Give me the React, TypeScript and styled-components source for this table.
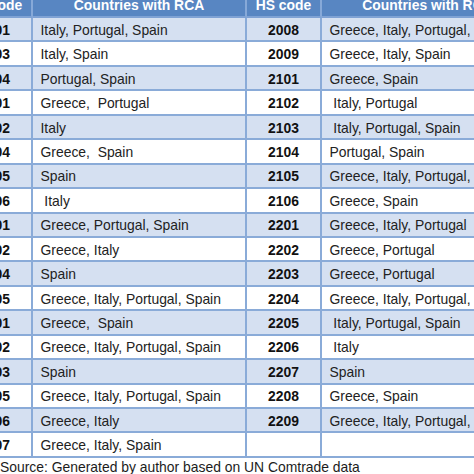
import styled, { createGlobalStyle } from "styled-components";

const GlobalStyle = createGlobalStyle`
  html, body {
    margin: 0;
    padding: 0;
    background: #ffffff;
    overflow: hidden;
  }
  body {
    font-family: "Liberation Sans", Arial, sans-serif;
    font-size: 13.9px;
    color: #1c1c1c;
  }
`;

const Page = styled.div`
  width: 474px;
  height: 474px;
  overflow: hidden;
`;

const Grid = styled.div`
  display: grid;
  grid-template-columns: 75px 214px 75px 213px;
  grid-auto-rows: 24.44px;
  width: 577px;
  margin-left: -42px;
  margin-top: -6.4px;
`;

const HeadCell = styled.div`
  box-sizing: border-box;
  display: flex;
  align-items: center;
  justify-content: center;
  background: #5886c2;
  color: #ffffff;
  font-weight: bold;
  border-right: 2px solid #87a9d8;
  border-bottom: 2px solid #7fa2d4;
  white-space: nowrap;
  overflow: hidden;
`;

const Cell = styled.div<{ $shade: boolean; $code?: boolean }>`
  box-sizing: border-box;
  display: flex;
  align-items: center;
  justify-content: ${(p) => (p.$code ? "center" : "flex-start")};
  padding-left: ${(p) => (p.$code ? "0" : "7.5px")};
  padding-top: 1px;
  background: ${(p) => (p.$shade ? "#d5e0f1" : "#ffffff")};
  color: ${(p) => (p.$code ? "#111111" : "#222222")};
  font-weight: ${(p) => (p.$code ? "bold" : "normal")};
  border-right: 2px solid #8aabd8;
  border-bottom: 2px solid #8aabd8;
  white-space: pre;
  overflow: hidden;
`;

const Source = styled.div`
  padding-top: 1px;
  line-height: 16px;
  white-space: nowrap;
  color: #1c1c1c;
`;

type Row = [string, string, string, string];

const rows: Row[] = [
  ["0701", "Italy, Portugal, Spain", "2008", "Greece, Italy, Portugal, Spain"],
  ["0703", "Italy, Spain", "2009", "Greece, Italy, Spain"],
  ["0704", "Portugal, Spain", "2101", "Greece, Spain"],
  ["0801", "Greece,  Portugal", "2102", " Italy, Portugal"],
  ["0802", "Italy", "2103", " Italy, Portugal, Spain"],
  ["0804", "Greece,  Spain", "2104", "Portugal, Spain"],
  ["0805", "Spain", "2105", "Greece, Italy, Portugal, Spain"],
  ["0806", " Italy", "2106", "Greece, Spain"],
  ["0901", "Greece, Portugal, Spain", "2201", "Greece, Italy, Portugal"],
  ["0902", "Greece, Italy", "2202", "Greece, Portugal"],
  ["0904", "Spain", "2203", "Greece, Portugal"],
  ["0905", "Greece, Italy, Portugal, Spain", "2204", "Greece, Italy, Portugal, Spain"],
  ["1001", "Greece,  Spain", "2205", " Italy, Portugal, Spain"],
  ["1002", "Greece, Italy, Portugal, Spain", "2206", " Italy"],
  ["1003", "Spain", "2207", "Spain"],
  ["1005", "Greece, Italy, Portugal, Spain", "2208", "Greece, Spain"],
  ["1006", "Greece, Italy", "2209", "Greece, Italy, Portugal, Spain"],
  ["1007", "Greece, Italy, Spain", "", ""],
];

export default function App() {
  return (
    <Page>
      <GlobalStyle />
      <Grid>
        <HeadCell>HS code</HeadCell>
        <HeadCell>Countries with RCA</HeadCell>
        <HeadCell>HS code</HeadCell>
        <HeadCell>Countries with RCA</HeadCell>
        {rows.map((r, i) => {
          const shade = i % 2 === 0;
          const rightShade = shade && r[2] !== "";
          return [
            <Cell key={`a${i}`} $shade={shade} $code>
              {r[0]}
            </Cell>,
            <Cell key={`b${i}`} $shade={shade}>
              {r[1]}
            </Cell>,
            <Cell key={`c${i}`} $shade={rightShade} $code>
              {r[2]}
            </Cell>,
            <Cell key={`d${i}`} $shade={rightShade}>
              {r[3]}
            </Cell>,
          ];
        })}
      </Grid>
      <Source>Source: Generated by author based on UN Comtrade data</Source>
    </Page>
  );
}
